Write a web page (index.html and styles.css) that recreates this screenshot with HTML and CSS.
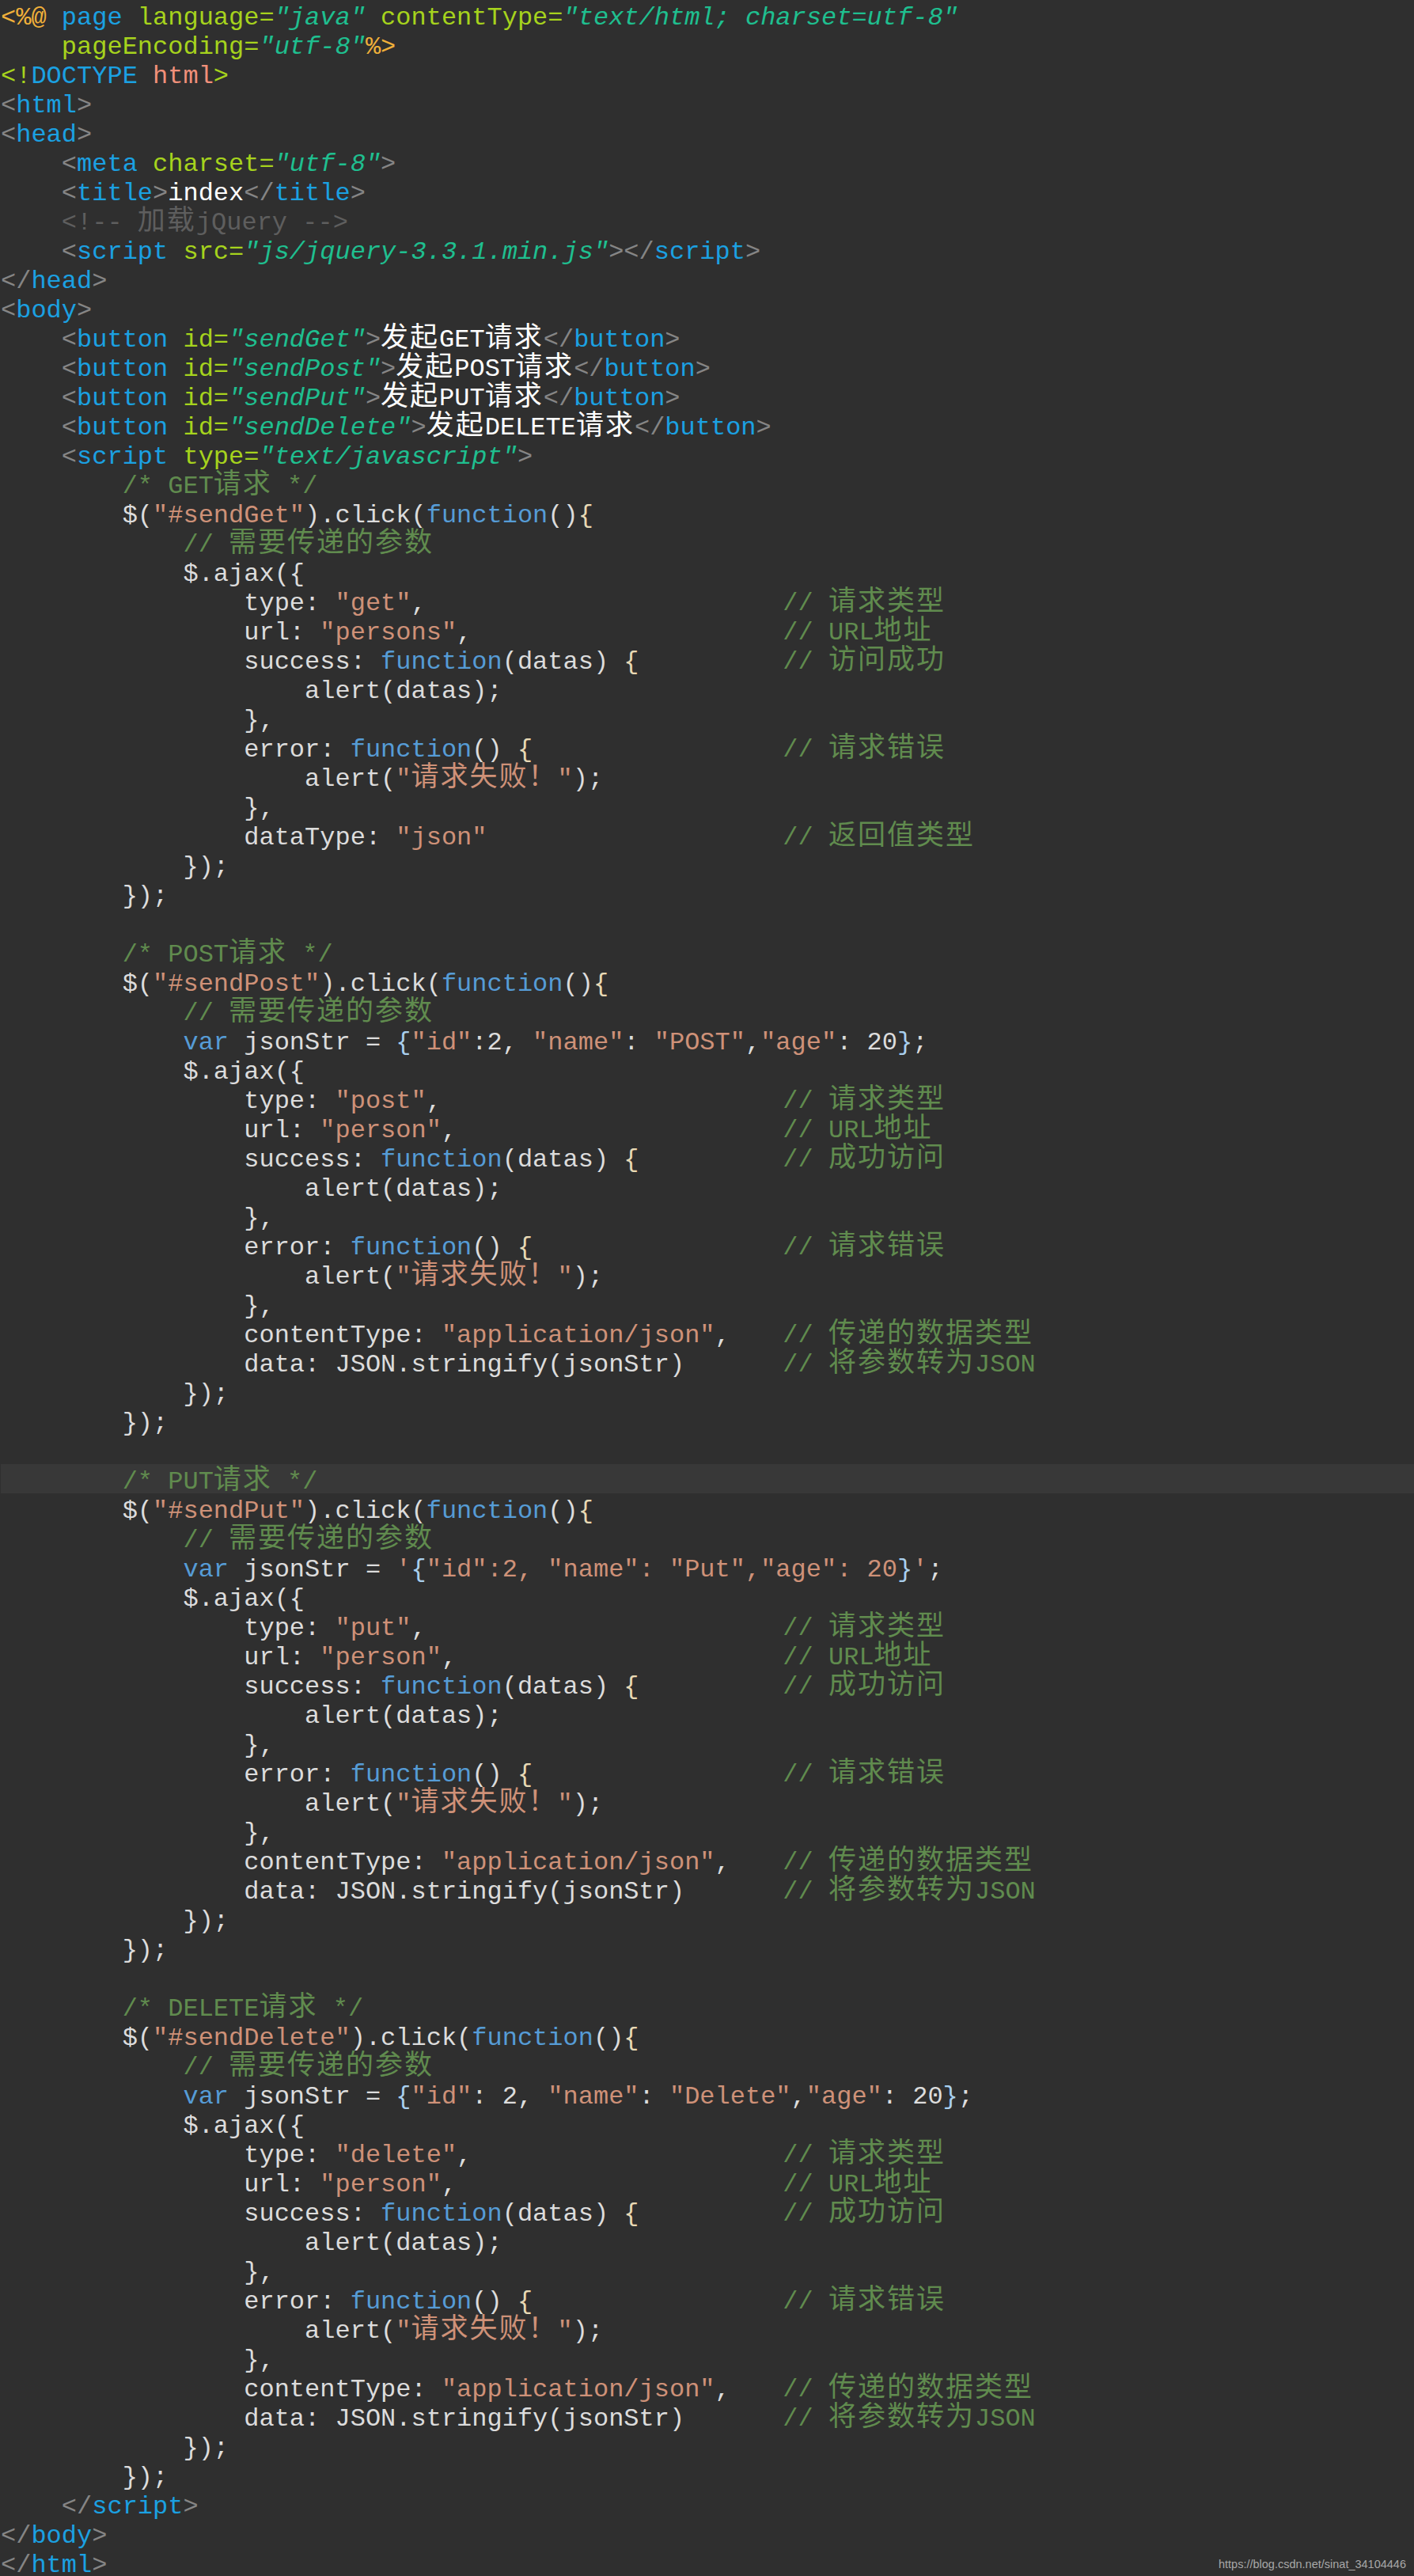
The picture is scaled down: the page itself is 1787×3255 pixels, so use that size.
FILE: index.html
```html
<!DOCTYPE html>
<html lang="zh-CN">
<head>
    <meta charset="UTF-8">
    <meta name="viewport" content="width=device-width, initial-scale=1.0">
    <title>index.jsp</title>
    <link rel="stylesheet" href="styles.css">
</head>
<body>
    <div class="editor">
        <div class="code">
<div class="ln"><span class="o">&lt;%@</span> <span class="t">page</span> <span class="a">language=</span><span class="v">"java"</span> <span class="a">contentType=</span><span class="v">"text/html; charset=utf-8"</span></div>
<div class="ln">    <span class="a">pageEncoding=</span><span class="v">"utf-8"</span><span class="o">%&gt;</span></div>
<div class="ln"><span class="a">&lt;!</span><span class="t">DOCTYPE</span> <span class="d">html</span><span class="a">&gt;</span></div>
<div class="ln"><span class="b">&lt;</span><span class="t">html</span><span class="b">&gt;</span></div>
<div class="ln"><span class="b">&lt;</span><span class="t">head</span><span class="b">&gt;</span></div>
<div class="ln">    <span class="b">&lt;</span><span class="t">meta</span> <span class="a">charset=</span><span class="v">"utf-8"</span><span class="b">&gt;</span></div>
<div class="ln">    <span class="b">&lt;</span><span class="t">title</span><span class="b">&gt;</span><span class="x">index</span><span class="b">&lt;/</span><span class="t">title</span><span class="b">&gt;</span></div>
<div class="ln">    <span class="hc">&lt;!-- <span class="zh">加载</span>jQuery --&gt;</span></div>
<div class="ln">    <span class="b">&lt;</span><span class="t">script</span> <span class="a">src=</span><span class="v">"js/jquery-3.3.1.min.js"</span><span class="b">&gt;&lt;/</span><span class="t">script</span><span class="b">&gt;</span></div>
<div class="ln"><span class="b">&lt;/</span><span class="t">head</span><span class="b">&gt;</span></div>
<div class="ln"><span class="b">&lt;</span><span class="t">body</span><span class="b">&gt;</span></div>
<div class="ln">    <span class="b">&lt;</span><span class="t">button</span> <span class="a">id=</span><span class="v">"sendGet"</span><span class="b">&gt;</span><span class="x"><span class="zh">发起</span>GET<span class="zh">请求</span></span><span class="b">&lt;/</span><span class="t">button</span><span class="b">&gt;</span></div>
<div class="ln">    <span class="b">&lt;</span><span class="t">button</span> <span class="a">id=</span><span class="v">"sendPost"</span><span class="b">&gt;</span><span class="x"><span class="zh">发起</span>POST<span class="zh">请求</span></span><span class="b">&lt;/</span><span class="t">button</span><span class="b">&gt;</span></div>
<div class="ln">    <span class="b">&lt;</span><span class="t">button</span> <span class="a">id=</span><span class="v">"sendPut"</span><span class="b">&gt;</span><span class="x"><span class="zh">发起</span>PUT<span class="zh">请求</span></span><span class="b">&lt;/</span><span class="t">button</span><span class="b">&gt;</span></div>
<div class="ln">    <span class="b">&lt;</span><span class="t">button</span> <span class="a">id=</span><span class="v">"sendDelete"</span><span class="b">&gt;</span><span class="x"><span class="zh">发起</span>DELETE<span class="zh">请求</span></span><span class="b">&lt;/</span><span class="t">button</span><span class="b">&gt;</span></div>
<div class="ln">    <span class="b">&lt;</span><span class="t">script</span> <span class="a">type=</span><span class="v">"text/javascript"</span><span class="b">&gt;</span></div>
<div class="ln">        <span class="c">/* GET<span class="zh">请求</span> */</span></div>
<div class="ln">        $(<span class="s">"#sendGet"</span>).click(<span class="k">function</span>()<span class="br">{</span></div>
<div class="ln">            <span class="c">// <span class="zh">需要传递的参数</span></span></div>
<div class="ln">            $.ajax({</div>
<div class="ln">                type: <span class="s">"get"</span>,                       <span class="c tc">// <span class="zh">请求类型</span></span></div>
<div class="ln">                url: <span class="s">"persons"</span>,                    <span class="c tc">// URL<span class="zh">地址</span></span></div>
<div class="ln">                success: <span class="k">function</span>(datas) <span class="br">{</span>         <span class="c tc">// <span class="zh">访问成功</span></span></div>
<div class="ln">                    alert(datas);</div>
<div class="ln">                },</div>
<div class="ln">                error: <span class="k">function</span>() <span class="br">{</span>                <span class="c tc">// <span class="zh">请求错误</span></span></div>
<div class="ln">                    alert(<span class="s">"<span class="zh">请求失败！</span>"</span>);</div>
<div class="ln">                },</div>
<div class="ln">                dataType: <span class="s">"json"</span>                   <span class="c tc">// <span class="zh">返回值类型</span></span></div>
<div class="ln">            });</div>
<div class="ln">        });</div>
<div class="ln"></div>
<div class="ln">        <span class="c">/* POST<span class="zh">请求</span> */</span></div>
<div class="ln">        $(<span class="s">"#sendPost"</span>).click(<span class="k">function</span>()<span class="br">{</span></div>
<div class="ln">            <span class="c">// <span class="zh">需要传递的参数</span></span></div>
<div class="ln">            <span class="k">var</span> jsonStr = <span class="bb">{</span><span class="s">"id"</span>:2, <span class="s">"name"</span>: <span class="s">"POST"</span>,<span class="s">"age"</span>: 20<span class="bb">}</span>;</div>
<div class="ln">            $.ajax({</div>
<div class="ln">                type: <span class="s">"post"</span>,                      <span class="c tc">// <span class="zh">请求类型</span></span></div>
<div class="ln">                url: <span class="s">"person"</span>,                     <span class="c tc">// URL<span class="zh">地址</span></span></div>
<div class="ln">                success: <span class="k">function</span>(datas) <span class="br">{</span>         <span class="c tc">// <span class="zh">成功访问</span></span></div>
<div class="ln">                    alert(datas);</div>
<div class="ln">                },</div>
<div class="ln">                error: <span class="k">function</span>() <span class="br">{</span>                <span class="c tc">// <span class="zh">请求错误</span></span></div>
<div class="ln">                    alert(<span class="s">"<span class="zh">请求失败！</span>"</span>);</div>
<div class="ln">                },</div>
<div class="ln">                contentType: <span class="s">"application/json"</span>,   <span class="c tc">// <span class="zh">传递的数据类型</span></span></div>
<div class="ln">                data: JSON.stringify(jsonStr)      <span class="c tc">// <span class="zh">将参数转为</span>JSON</span></div>
<div class="ln">            });</div>
<div class="ln">        });</div>
<div class="ln"></div>
<div class="ln cur">        <span class="c">/* PUT<span class="zh">请求</span> */</span></div>
<div class="ln">        $(<span class="s">"#sendPut"</span>).click(<span class="k">function</span>()<span class="br">{</span></div>
<div class="ln">            <span class="c">// <span class="zh">需要传递的参数</span></span></div>
<div class="ln">            <span class="k">var</span> jsonStr = <span class="s">'<span class="bb">{</span>"id":2, "name": "Put","age": 20<span class="bb">}</span>'</span>;</div>
<div class="ln">            $.ajax({</div>
<div class="ln">                type: <span class="s">"put"</span>,                       <span class="c tc">// <span class="zh">请求类型</span></span></div>
<div class="ln">                url: <span class="s">"person"</span>,                     <span class="c tc">// URL<span class="zh">地址</span></span></div>
<div class="ln">                success: <span class="k">function</span>(datas) <span class="br">{</span>         <span class="c tc">// <span class="zh">成功访问</span></span></div>
<div class="ln">                    alert(datas);</div>
<div class="ln">                },</div>
<div class="ln">                error: <span class="k">function</span>() <span class="br">{</span>                <span class="c tc">// <span class="zh">请求错误</span></span></div>
<div class="ln">                    alert(<span class="s">"<span class="zh">请求失败！</span>"</span>);</div>
<div class="ln">                },</div>
<div class="ln">                contentType: <span class="s">"application/json"</span>,   <span class="c tc">// <span class="zh">传递的数据类型</span></span></div>
<div class="ln">                data: JSON.stringify(jsonStr)      <span class="c tc">// <span class="zh">将参数转为</span>JSON</span></div>
<div class="ln">            });</div>
<div class="ln">        });</div>
<div class="ln"></div>
<div class="ln">        <span class="c">/* DELETE<span class="zh">请求</span> */</span></div>
<div class="ln">        $(<span class="s">"#sendDelete"</span>).click(<span class="k">function</span>()<span class="br">{</span></div>
<div class="ln">            <span class="c">// <span class="zh">需要传递的参数</span></span></div>
<div class="ln">            <span class="k">var</span> jsonStr = <span class="bb">{</span><span class="s">"id"</span>: 2, <span class="s">"name"</span>: <span class="s">"Delete"</span>,<span class="s">"age"</span>: 20<span class="bb">}</span>;</div>
<div class="ln">            $.ajax({</div>
<div class="ln">                type: <span class="s">"delete"</span>,                    <span class="c tc">// <span class="zh">请求类型</span></span></div>
<div class="ln">                url: <span class="s">"person"</span>,                     <span class="c tc">// URL<span class="zh">地址</span></span></div>
<div class="ln">                success: <span class="k">function</span>(datas) <span class="br">{</span>         <span class="c tc">// <span class="zh">成功访问</span></span></div>
<div class="ln">                    alert(datas);</div>
<div class="ln">                },</div>
<div class="ln">                error: <span class="k">function</span>() <span class="br">{</span>                <span class="c tc">// <span class="zh">请求错误</span></span></div>
<div class="ln">                    alert(<span class="s">"<span class="zh">请求失败！</span>"</span>);</div>
<div class="ln">                },</div>
<div class="ln">                contentType: <span class="s">"application/json"</span>,   <span class="c tc">// <span class="zh">传递的数据类型</span></span></div>
<div class="ln">                data: JSON.stringify(jsonStr)      <span class="c tc">// <span class="zh">将参数转为</span>JSON</span></div>
<div class="ln">            });</div>
<div class="ln">        });</div>
<div class="ln">    <span class="b">&lt;/</span><span class="t">script</span><span class="b">&gt;</span></div>
<div class="ln"><span class="b">&lt;/</span><span class="t">body</span><span class="b">&gt;</span></div>
<div class="ln"><span class="b">&lt;/</span><span class="t">html</span><span class="b">&gt;</span></div>
        </div>
        <div class="mark">https://blog.csdn.net/sinat_34104446</div>
    </div>
</body>
</html>
```

FILE: styles.css
```css
body {
    margin: 0;
    padding: 0;
    background: #2f2f2f;
}
.editor {
    position: relative;
    min-height: 100vh;
    background: #2f2f2f;
    color: #dcdcdc;
    font-family: 'Liberation Mono', 'Noto Sans CJK SC', monospace;
    font-size: 32px;
}
.code {
    padding: 0 0 0 1px;
}
.ln {
    height: 37px;
    line-height: 46px;
    white-space: pre;
}
.ln.cur {
    background: #383838;
}
.zh {
    font-family: 'Noto Sans CJK SC', sans-serif;
    font-size: 35px;
    letter-spacing: 2px;
    line-height: 0;
    font-style: normal;
}

/* jsp / html tokens */
.o {
    color: #f0b03a;
}
.t {
    color: #1ba1e2;
}
.a {
    color: #a6d31d;
}
.v {
    color: #1fbf8f;
    font-style: italic;
}
.b {
    color: #858585;
}
.d {
    color: #f0907a;
}
.x {
    color: #ffffff;
}
.hc {
    color: #5e5e5e;
}

/* js tokens */
.k {
    color: #569cd6;
}
.s {
    color: #ce9178;
}
.c {
    color: #608b4e;
}
/* trailing comments sit a little right of the column */
.tc {
    margin-left: 9px;
}
.br {
    color: #e8d9b4;
}
.bb {
    color: #a9cfee;
}

.mark {
    position: absolute;
    right: 10px;
    bottom: 9px;
    font-family: 'Liberation Sans', Arial, sans-serif;
    font-size: 14.5px;
    line-height: 1;
    color: #a8a8a8;
}
```
